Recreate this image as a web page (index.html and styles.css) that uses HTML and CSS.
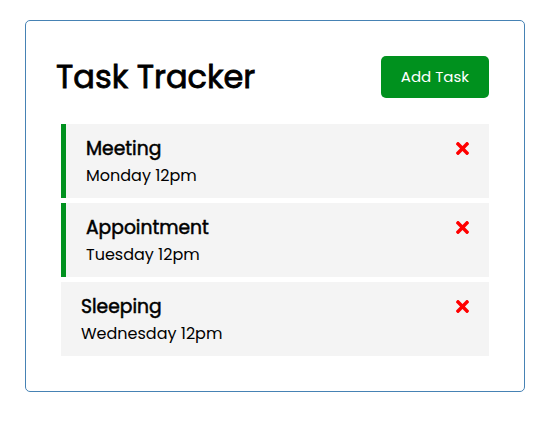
FILE: index.html
```html
<!DOCTYPE html>
<html lang="en">
<head>
    <meta charset="UTF-8">
    <meta name="viewport" content="width=device-width, initial-scale=1.0">
    <title>Task Tracker</title>
    <link rel="stylesheet" href="styles.css">
</head>
<body>
    <div class="container">
        <header class="header">
            <h1>Task Tracker</h1>
            <button class="btn">Add Task</button>
        </header>
        <div class="task reminder">
            <h3>Meeting
                <svg class="del" viewBox="0 0 352 512"><path d="M242.72 256l100.07-100.07c12.28-12.280 12.28-32.19 0-44.48l-22.24-22.24c-12.28-12.28-32.19-12.28-44.48 0L176 189.28 75.93 89.21c-12.28-12.28-32.19-12.28-44.48 0L9.21 111.45c-12.28 12.28-12.28 32.19 0 44.48L109.28 256 9.21 356.07c-12.28 12.28-12.28 32.19 0 44.48l22.24 22.24c12.28 12.28 32.2 12.28 44.48 0L176 322.72l100.07 100.07c12.28 12.28 32.2 12.28 44.48 0l22.24-22.24c12.28-12.28 12.28-32.19 0-44.48L242.72 256z"/></svg>
            </h3>
            <p>Monday 12pm</p>
        </div>
        <div class="task reminder">
            <h3>Appointment
                <svg class="del" viewBox="0 0 352 512"><path d="M242.72 256l100.07-100.07c12.28-12.280 12.28-32.19 0-44.48l-22.24-22.24c-12.28-12.28-32.19-12.28-44.48 0L176 189.28 75.93 89.21c-12.28-12.28-32.19-12.28-44.48 0L9.21 111.45c-12.28 12.28-12.28 32.19 0 44.48L109.28 256 9.21 356.07c-12.28 12.28-12.28 32.19 0 44.48l22.24 22.24c12.28 12.28 32.2 12.28 44.48 0L176 322.72l100.07 100.07c12.28 12.28 32.2 12.28 44.48 0l22.24-22.24c12.28-12.28 12.28-32.19 0-44.48L242.72 256z"/></svg>
            </h3>
            <p>Tuesday 12pm</p>
        </div>
        <div class="task">
            <h3>Sleeping
                <svg class="del" viewBox="0 0 352 512"><path d="M242.72 256l100.07-100.07c12.28-12.280 12.28-32.19 0-44.48l-22.24-22.24c-12.28-12.28-32.19-12.28-44.48 0L176 189.28 75.93 89.21c-12.28-12.28-32.19-12.28-44.48 0L9.21 111.45c-12.28 12.28-12.28 32.19 0 44.48L109.28 256 9.21 356.07c-12.28 12.28-12.28 32.19 0 44.48l22.24 22.24c12.28 12.28 32.2 12.28 44.48 0L176 322.72l100.07 100.07c12.28 12.28 32.2 12.28 44.48 0l22.24-22.24c12.28-12.28 12.28-32.19 0-44.48L242.72 256z"/></svg>
            </h3>
            <p>Wednesday 12pm</p>
        </div>
    </div>
</body>
</html>
```

FILE: styles.css
```css
* {
    box-sizing: border-box;
    margin: 0;
    padding: 0;
}
body {
    font-family: 'Poppins', 'Open Sans', sans-serif;
    background: #fff;
    color: #000;
}
.container {
    width: 500px;
    margin: 20px 0 0 25px;
    min-height: 300px;
    border: 1px solid steelblue;
    padding: 30px;
    border-radius: 5px;
}
.header {
    display: flex;
    justify-content: space-between;
    align-items: center;
    margin-bottom: 21px;
}
.header h1 {
    font-size: 32px;
    font-weight: 400;
    -webkit-text-stroke: 0.8px #000; /* medium weight isn't installed */
}
.btn {
    display: inline-block;
    background: #00911e;
    color: #fff;
    border: none;
    padding: 10px 20px;
    margin: 5px;
    border-radius: 5px;
    font-size: 15px;
    line-height: 22px;
    font-family: inherit;
    cursor: pointer;
}
.task {
    background: #f4f4f4;
    margin: 5px;
    padding: 11px 20px 9px;
    cursor: pointer;
}
.task.reminder {
    border-left: 5px solid #00911e;
}
.task h3 {
    display: flex;
    align-items: center;
    justify-content: space-between;
    font-size: 18.72px;
    font-weight: 400;
    line-height: 28px;
    -webkit-text-stroke: 0.5px #000;
}
.task p {
    font-size: 16px;
    line-height: 26px;
}
.del {
    width: 13px;
    height: 19px;
    margin-top: -2px;
    fill: red;
}
```
